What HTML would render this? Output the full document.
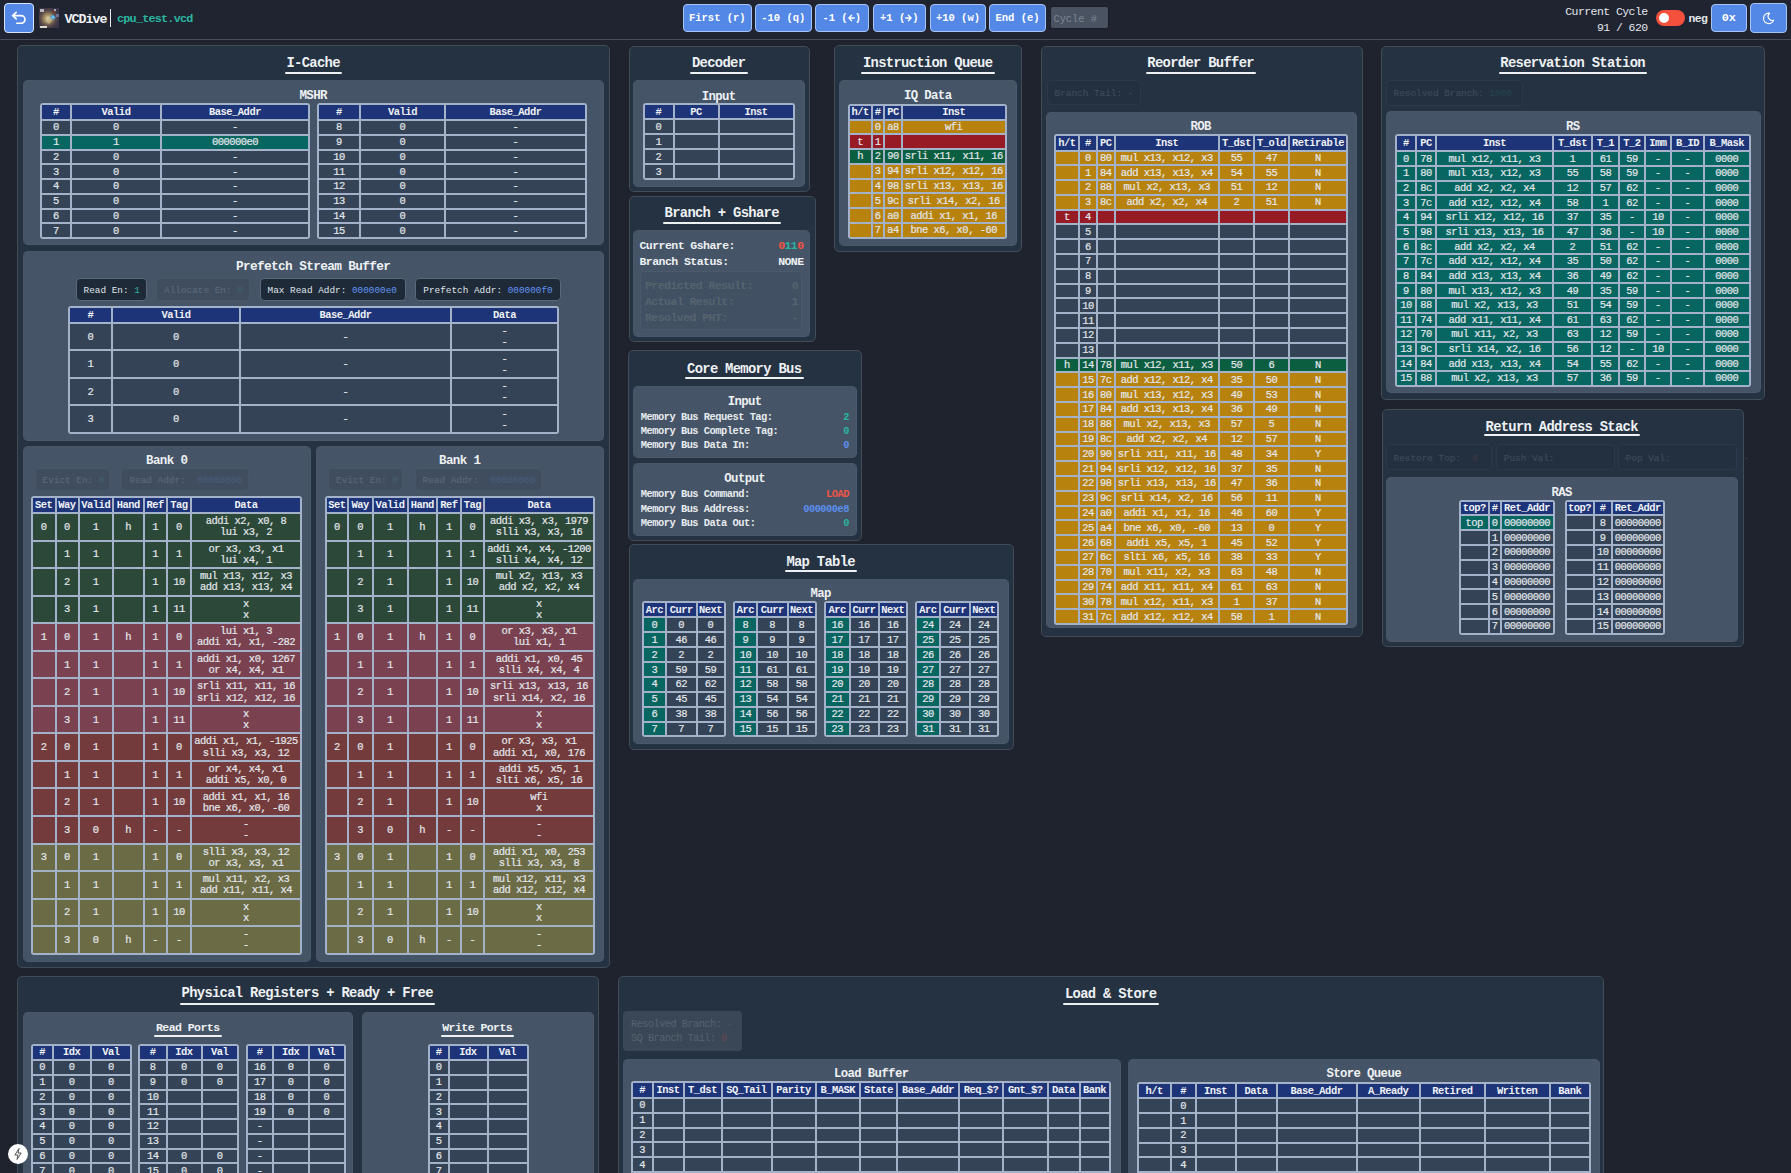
<!DOCTYPE html><html><head><meta charset="utf-8"><style>
*{box-sizing:border-box}
html,body{margin:0;padding:0}
body{width:1791px;height:1173px;overflow:hidden;background:#1f232e;font-family:"Liberation Mono",monospace;color:#e8ecf0;position:relative}
.hdr{position:absolute;left:0;top:0;width:1791px;height:39.5px;background:#1f2430;border-bottom:1.5px solid #474e59}
.p{position:absolute;background:#243242;border:1px solid #434b57;border-radius:5px}
.s{position:absolute;background:#455466;border-radius:5px;border:1px solid #4b596a;border-top-color:#485667;border-left-color:#485667}
.t{position:absolute;text-align:center;font-weight:bold;white-space:pre;color:#eef1f4}
.ul{position:absolute;height:2px;background:#eef1f4;border-radius:1px}
.tx{position:absolute;white-space:pre}
.g{position:absolute;display:grid;gap:2px;padding:2px;background:#a3b2c9;border-radius:3px}
.g>div{background:#344355;display:flex;align-items:center;justify-content:center;white-space:pre;overflow:hidden;color:#e3e7ec;-webkit-text-stroke:0.2px #e3e7ec}
.g>div.h{background:#1e3478;font-weight:bold;color:#eef1f5;-webkit-text-stroke:0}
.g>div.te{background:#076660}
.g>div.or{background:#b8820f}
.g>div.rd{background:#961b25}
.g>div.gn{background:#0b5f40}
.g>div.s0{background:#2c4838}
.g>div.s1{background:#7a4250}
.g>div.s2{background:#733b3b}
.g>div.s3{background:#6b6b46}
.ml{display:block;text-align:center;line-height:11.2px;position:relative;top:0.5px}
.b{position:absolute;background:#1f2a38;border:1.5px solid #5a687a;border-radius:4px;font-size:9.4px;display:flex;align-items:center;padding-left:7px;padding-top:2px;white-space:pre;color:#dfe4ea}
.b.dim{opacity:.14}
.btn{position:absolute;padding-top:1px;background:#5388e6;border:1px solid #a8c4f2;border-radius:4px;color:#fff;font-weight:bold;font-size:10.5px;display:flex;align-items:center;justify-content:center;white-space:pre}
</style></head><body>
<div class="hdr"></div>
<div class="btn" style="left:4px;top:3px;width:30px;height:30px;border-color:#d6e4ff"></div>
<svg style="position:absolute;left:0;top:0" width="40" height="40"><path d="M16.2 12.3 L12.6 15.6 L16.2 18.9 M12.8 15.6 H21.2 A3.8 3.8 0 0 1 21.2 23.2 H16.8" fill="none" stroke="#fff" stroke-width="1.6" stroke-linecap="round" stroke-linejoin="round"/></svg>
<svg style="position:absolute;left:39px;top:8px" width="20" height="20" viewBox="0 0 20 20"><defs><radialGradient id="lg" cx="45%" cy="52%" r="55%"><stop offset="0" stop-color="#e6d6ac"/><stop offset=".35" stop-color="#a08a62"/><stop offset=".7" stop-color="#5a4a48"/><stop offset="1" stop-color="#3a3448"/></radialGradient></defs><rect width="20" height="20" fill="url(#lg)"/><path d="M6 13 L12 7 L16 10 L10 16 Z" fill="#cbbf95" opacity=".55"/><path d="M11 9 L14 6.5 L17 9.5 L14 12 Z" fill="#3f9bd4"/><path d="M12.5 9 L14 8 L15.3 9.3 L14 10.4 Z" fill="#8fd6f0"/><rect x="1" y="1" width="4" height="3" fill="#d8d4e0" opacity=".8"/><rect x="1" y="18" width="7" height="2" fill="#eeeadc" opacity=".9"/><rect x="15" y="1" width="2" height="2" fill="#cfe0e8" opacity=".7"/><rect x="17" y="6" width="3" height="3" fill="#8a9ac8" opacity=".6"/><rect x="13" y="3" width="4" height="2" fill="#7a3a30" opacity=".7"/></svg>
<div class="tx" style="top:11.63px;font-size:13.34px;letter-spacing:-0.983px;line-height:16.01px;left:64.5px;font-weight:bold;color:#eef1f4;">VCDive</div>
<div style="position:absolute;left:110px;top:9px;width:1px;height:18px;background:#e8ecf0"></div>
<div class="tx" style="top:12.09px;font-size:11.76px;letter-spacing:-0.756px;line-height:14.11px;left:117px;font-weight:bold;color:#2ab7a0;">cpu_test.vcd</div>
<div class="btn" style="left:682.6px;top:4.4px;width:69.4px;height:27.2px">First (r)</div>
<div class="btn" style="left:754.5px;top:4.4px;width:57.5px;height:27.2px">-10 (q)</div>
<div class="btn" style="left:814.6px;top:4.4px;width:54.2px;height:27.2px">-1 (<svg width="7" height="8" viewBox="0 0 7 8" style="vertical-align:-0.5px"><path d="M6.3 4H1 M3.6 1.2 L0.9 4 L3.6 6.8" fill="none" stroke="#fff" stroke-width="1.3" stroke-linecap="round" stroke-linejoin="round"/></svg>)</div>
<div class="btn" style="left:872.7px;top:4.4px;width:53.2px;height:27.2px">+1 (<svg width="7" height="8" viewBox="0 0 7 8" style="vertical-align:-0.5px"><path d="M0.7 4H6 M3.4 1.2 L6.1 4 L3.4 6.8" fill="none" stroke="#fff" stroke-width="1.3" stroke-linecap="round" stroke-linejoin="round"/></svg>)</div>
<div class="btn" style="left:929.7px;top:4.4px;width:56.5px;height:27.2px">+10 (w)</div>
<div class="btn" style="left:989.3px;top:4.4px;width:56.5px;height:27.2px">End (e)</div>
<div style="position:absolute;left:1050.4px;top:6.4px;width:58.6px;height:23.1px;background:#4a5362;border-radius:3px;color:#7c8594;font-size:10.4px;display:flex;align-items:center;padding-left:2px;padding-top:2px;border:1px solid #1a1e27;white-space:pre">Cycle #</div>
<div class="tx" style="top:5.35px;font-size:11.5px;letter-spacing:-0.57px;line-height:13.8px;left:1047.57px;width:600px;text-align:right;color:#e3e7ec;">Current Cycle</div>
<div class="tx" style="top:20.85px;font-size:11.5px;letter-spacing:-0.57px;line-height:13.8px;left:1047.57px;width:600px;text-align:right;color:#e3e7ec;">91 / 620</div>
<div style="position:absolute;left:1656px;top:10px;width:29px;height:16px;background:#f4503d;border-radius:8px"></div>
<div style="position:absolute;left:1658.7px;top:12.7px;width:10.6px;height:10.6px;background:#fff;border-radius:6px"></div>
<div class="tx" style="top:12.06px;font-size:11.45px;letter-spacing:-0.567px;line-height:13.74px;left:1688.5px;font-weight:bold;color:#e3e7ec;">neg</div>
<div class="btn" style="left:1711px;top:4px;width:35.6px;height:27.7px;font-size:11.8px">0x</div>
<div class="btn" style="left:1750px;top:3px;width:36.8px;height:29.5px"></div>
<svg style="position:absolute;left:1750px;top:3px" width="37" height="30"><path d="M19.6 10.2 A5.2 5.2 0 1 0 23.6 17.2 A4.1 4.1 0 0 1 19.6 10.2 Z" fill="none" stroke="#fff" stroke-width="1.2" stroke-linejoin="round"/></svg>
<div class="p" style="left:17px;top:45px;width:593px;height:922.5px"></div>
<div class="t" style="left:13.16px;top:55.16px;width:600px;font-size:13.84px;letter-spacing:-0.686px;line-height:16.61px">I-Cache</div>
<div class="ul" style="left:284.83px;top:71.5px;width:57.34px"></div>
<div class="s" style="left:23px;top:80px;width:581px;height:165px"></div>
<div class="t" style="left:13.19px;top:89.17px;width:600px;font-size:12.54px;letter-spacing:-0.621px;line-height:15.05px">MSHR</div>
<div class="g" style="left:40px;top:103px;width:270.00px;height:136.00px;grid-template-columns:28px 88px 146px;grid-template-rows:14px repeat(8,12.75px);font-size:10.46px;letter-spacing:-0.518px">
<div class="h">#</div><div class="h">Valid</div><div class="h">Base_Addr</div><div>0</div><div>0</div><div>-</div><div class="te">1</div><div class="te">1</div><div class="te">000000e0</div><div>2</div><div>0</div><div>-</div><div>3</div><div>0</div><div>-</div><div>4</div><div>0</div><div>-</div><div>5</div><div>0</div><div>-</div><div>6</div><div>0</div><div>-</div><div>7</div><div>0</div><div>-</div>
</div>
<div class="g" style="left:317px;top:103px;width:270.00px;height:136.00px;grid-template-columns:40px 83px 139px;grid-template-rows:14px repeat(8,12.75px);font-size:10.46px;letter-spacing:-0.518px">
<div class="h">#</div><div class="h">Valid</div><div class="h">Base_Addr</div><div>8</div><div>0</div><div>-</div><div>9</div><div>0</div><div>-</div><div>10</div><div>0</div><div>-</div><div>11</div><div>0</div><div>-</div><div>12</div><div>0</div><div>-</div><div>13</div><div>0</div><div>-</div><div>14</div><div>0</div><div>-</div><div>15</div><div>0</div><div>-</div>
</div>
<div class="s" style="left:23px;top:251px;width:581px;height:190px"></div>
<div class="t" style="left:13.18px;top:258.64px;width:600px;font-size:12.75px;letter-spacing:-0.632px;line-height:15.3px">Prefetch Stream Buffer</div>
<div class="b" style="left:75.5px;top:277.6px;width:71.5px;height:23.899999999999977px">Read En: <span style="color:#2bb3a0">1</span></div>
<div class="b dim" style="left:156px;top:277.6px;width:94px;height:23.899999999999977px">Allocate En: <span style="color:#2bb3a0">0</span></div>
<div class="b" style="left:259.5px;top:277.6px;width:146.5px;height:23.899999999999977px">Max Read Addr: <span style="color:#6094f4">000000e0</span></div>
<div class="b" style="left:415.3px;top:277.6px;width:146.2px;height:23.899999999999977px">Prefetch Addr: <span style="color:#6094f4">000000f0</span></div>
<div class="g" style="left:68px;top:305.8px;width:491.00px;height:128.20px;grid-template-columns:41px 126px 209px 105px;grid-template-rows:14.2px repeat(4,25.5px);font-size:10.46px;letter-spacing:-0.518px">
<div class="h">#</div><div class="h">Valid</div><div class="h">Base_Addr</div><div class="h">Data</div><div>0</div><div>0</div><div>-</div><div><span class="ml">-<br>-</span></div><div>1</div><div>0</div><div>-</div><div><span class="ml">-<br>-</span></div><div>2</div><div>0</div><div>-</div><div><span class="ml">-<br>-</span></div><div>3</div><div>0</div><div>-</div><div><span class="ml">-<br>-</span></div>
</div>
<div class="s" style="left:23px;top:446px;width:287.5px;height:516px"></div>
<div class="t" style="left:-133.31px;top:454.17px;width:600px;font-size:12.54px;letter-spacing:-0.621px;line-height:15.05px">Bank 0</div>
<div class="b dim" style="left:34.5px;top:468.4px;width:75.5px;height:22.200000000000045px">Evict En: <span style="color:#2bb3a0">0</span></div>
<div class="b dim" style="left:121.4px;top:468.4px;width:127.6px;height:22.200000000000045px">Read Addr:  <span style="color:#6094f4">00000000</span></div>
<div class="g" style="left:31px;top:496px;width:271.00px;height:459.00px;grid-template-columns:21.5px 21.0px 32.5px 28.5px 21.5px 22px 108px;grid-template-rows:14px repeat(16,25.562px);font-size:10.46px;letter-spacing:-0.518px">
<div class="h">Set</div><div class="h">Way</div><div class="h">Valid</div><div class="h">Hand</div><div class="h">Ref</div><div class="h">Tag</div><div class="h">Data</div><div class="s0">0</div><div class="s0">0</div><div class="s0">1</div><div class="s0">h</div><div class="s0">1</div><div class="s0">0</div><div class="s0"><span class="ml">addi x2, x0, 8<br>lui x3, 2</span></div><div class="s0"></div><div class="s0">1</div><div class="s0">1</div><div class="s0"></div><div class="s0">1</div><div class="s0">1</div><div class="s0"><span class="ml">or x3, x3, x1<br>lui x4, 1</span></div><div class="s0"></div><div class="s0">2</div><div class="s0">1</div><div class="s0"></div><div class="s0">1</div><div class="s0">10</div><div class="s0"><span class="ml">mul x13, x12, x3<br>add x13, x13, x4</span></div><div class="s0"></div><div class="s0">3</div><div class="s0">1</div><div class="s0"></div><div class="s0">1</div><div class="s0">11</div><div class="s0"><span class="ml">x<br>x</span></div><div class="s1">1</div><div class="s1">0</div><div class="s1">1</div><div class="s1">h</div><div class="s1">1</div><div class="s1">0</div><div class="s1"><span class="ml">lui x1, 3<br>addi x1, x1, -282</span></div><div class="s1"></div><div class="s1">1</div><div class="s1">1</div><div class="s1"></div><div class="s1">1</div><div class="s1">1</div><div class="s1"><span class="ml">addi x1, x0, 1267<br>or x4, x4, x1</span></div><div class="s1"></div><div class="s1">2</div><div class="s1">1</div><div class="s1"></div><div class="s1">1</div><div class="s1">10</div><div class="s1"><span class="ml">srli x11, x11, 16<br>srli x12, x12, 16</span></div><div class="s1"></div><div class="s1">3</div><div class="s1">1</div><div class="s1"></div><div class="s1">1</div><div class="s1">11</div><div class="s1"><span class="ml">x<br>x</span></div><div class="s2">2</div><div class="s2">0</div><div class="s2">1</div><div class="s2"></div><div class="s2">1</div><div class="s2">0</div><div class="s2"><span class="ml">addi x1, x1, -1925<br>slli x3, x3, 12</span></div><div class="s2"></div><div class="s2">1</div><div class="s2">1</div><div class="s2"></div><div class="s2">1</div><div class="s2">1</div><div class="s2"><span class="ml">or x4, x4, x1<br>addi x5, x0, 0</span></div><div class="s2"></div><div class="s2">2</div><div class="s2">1</div><div class="s2"></div><div class="s2">1</div><div class="s2">10</div><div class="s2"><span class="ml">addi x1, x1, 16<br>bne x6, x0, -60</span></div><div class="s2"></div><div class="s2">3</div><div class="s2">0</div><div class="s2">h</div><div class="s2">-</div><div class="s2">-</div><div class="s2"><span class="ml">-<br>-</span></div><div class="s3">3</div><div class="s3">0</div><div class="s3">1</div><div class="s3"></div><div class="s3">1</div><div class="s3">0</div><div class="s3"><span class="ml">slli x3, x3, 12<br>or x3, x3, x1</span></div><div class="s3"></div><div class="s3">1</div><div class="s3">1</div><div class="s3"></div><div class="s3">1</div><div class="s3">1</div><div class="s3"><span class="ml">mul x11, x2, x3<br>add x11, x11, x4</span></div><div class="s3"></div><div class="s3">2</div><div class="s3">1</div><div class="s3"></div><div class="s3">1</div><div class="s3">10</div><div class="s3"><span class="ml">x<br>x</span></div><div class="s3"></div><div class="s3">3</div><div class="s3">0</div><div class="s3">h</div><div class="s3">-</div><div class="s3">-</div><div class="s3"><span class="ml">-<br>-</span></div>
</div>
<div class="s" style="left:316px;top:446px;width:287.5px;height:516px"></div>
<div class="t" style="left:159.69px;top:454.17px;width:600px;font-size:12.54px;letter-spacing:-0.621px;line-height:15.05px">Bank 1</div>
<div class="b dim" style="left:328px;top:468.4px;width:75px;height:22.200000000000045px">Evict En: <span style="color:#2bb3a0">0</span></div>
<div class="b dim" style="left:414.5px;top:468.4px;width:127.5px;height:22.200000000000045px">Read Addr:  <span style="color:#6094f4">00000000</span></div>
<div class="g" style="left:325px;top:496px;width:270.00px;height:459.00px;grid-template-columns:20px 22.5px 33.0px 27.5px 22px 21px 108px;grid-template-rows:14px repeat(16,25.562px);font-size:10.46px;letter-spacing:-0.518px">
<div class="h">Set</div><div class="h">Way</div><div class="h">Valid</div><div class="h">Hand</div><div class="h">Ref</div><div class="h">Tag</div><div class="h">Data</div><div class="s0">0</div><div class="s0">0</div><div class="s0">1</div><div class="s0">h</div><div class="s0">1</div><div class="s0">0</div><div class="s0"><span class="ml">addi x3, x3, 1979<br>slli x3, x3, 16</span></div><div class="s0"></div><div class="s0">1</div><div class="s0">1</div><div class="s0"></div><div class="s0">1</div><div class="s0">1</div><div class="s0"><span class="ml">addi x4, x4, -1200<br>slli x4, x4, 12</span></div><div class="s0"></div><div class="s0">2</div><div class="s0">1</div><div class="s0"></div><div class="s0">1</div><div class="s0">10</div><div class="s0"><span class="ml">mul x2, x13, x3<br>add x2, x2, x4</span></div><div class="s0"></div><div class="s0">3</div><div class="s0">1</div><div class="s0"></div><div class="s0">1</div><div class="s0">11</div><div class="s0"><span class="ml">x<br>x</span></div><div class="s1">1</div><div class="s1">0</div><div class="s1">1</div><div class="s1">h</div><div class="s1">1</div><div class="s1">0</div><div class="s1"><span class="ml">or x3, x3, x1<br>lui x1, 1</span></div><div class="s1"></div><div class="s1">1</div><div class="s1">1</div><div class="s1"></div><div class="s1">1</div><div class="s1">1</div><div class="s1"><span class="ml">addi x1, x0, 45<br>slli x4, x4, 4</span></div><div class="s1"></div><div class="s1">2</div><div class="s1">1</div><div class="s1"></div><div class="s1">1</div><div class="s1">10</div><div class="s1"><span class="ml">srli x13, x13, 16<br>srli x14, x2, 16</span></div><div class="s1"></div><div class="s1">3</div><div class="s1">1</div><div class="s1"></div><div class="s1">1</div><div class="s1">11</div><div class="s1"><span class="ml">x<br>x</span></div><div class="s2">2</div><div class="s2">0</div><div class="s2">1</div><div class="s2"></div><div class="s2">1</div><div class="s2">0</div><div class="s2"><span class="ml">or x3, x3, x1<br>addi x1, x0, 176</span></div><div class="s2"></div><div class="s2">1</div><div class="s2">1</div><div class="s2"></div><div class="s2">1</div><div class="s2">1</div><div class="s2"><span class="ml">addi x5, x5, 1<br>slti x6, x5, 16</span></div><div class="s2"></div><div class="s2">2</div><div class="s2">1</div><div class="s2"></div><div class="s2">1</div><div class="s2">10</div><div class="s2"><span class="ml">wfi<br>x</span></div><div class="s2"></div><div class="s2">3</div><div class="s2">0</div><div class="s2">h</div><div class="s2">-</div><div class="s2">-</div><div class="s2"><span class="ml">-<br>-</span></div><div class="s3">3</div><div class="s3">0</div><div class="s3">1</div><div class="s3"></div><div class="s3">1</div><div class="s3">0</div><div class="s3"><span class="ml">addi x1, x0, 253<br>slli x3, x3, 8</span></div><div class="s3"></div><div class="s3">1</div><div class="s3">1</div><div class="s3"></div><div class="s3">1</div><div class="s3">1</div><div class="s3"><span class="ml">mul x12, x11, x3<br>add x12, x12, x4</span></div><div class="s3"></div><div class="s3">2</div><div class="s3">1</div><div class="s3"></div><div class="s3">1</div><div class="s3">10</div><div class="s3"><span class="ml">x<br>x</span></div><div class="s3"></div><div class="s3">3</div><div class="s3">0</div><div class="s3">h</div><div class="s3">-</div><div class="s3">-</div><div class="s3"><span class="ml">-<br>-</span></div>
</div>
<div class="p" style="left:628.5px;top:45.5px;width:181.5px;height:146.0px"></div>
<div class="t" style="left:418.66px;top:55.36px;width:600px;font-size:13.84px;letter-spacing:-0.686px;line-height:16.61px">Decoder</div>
<div class="ul" style="left:690.33px;top:72px;width:57.34px"></div>
<div class="s" style="left:633px;top:80.2px;width:172px;height:106.39999999999999px"></div>
<div class="t" style="left:418.69px;top:89.71px;width:600px;font-size:12.32px;letter-spacing:-0.61px;line-height:14.78px">Input</div>
<div class="g" style="left:642.5px;top:103.4px;width:152.00px;height:76.60px;grid-template-columns:28.0px 43.0px 73.0px;grid-template-rows:13.1px repeat(4,12.875px);font-size:10.46px;letter-spacing:-0.518px">
<div class="h">#</div><div class="h">PC</div><div class="h">Inst</div><div>0</div><div></div><div></div><div>1</div><div></div><div></div><div>2</div><div></div><div></div><div>3</div><div></div><div></div>
</div>
<div class="p" style="left:628.5px;top:195.5px;width:187.0px;height:146.0px"></div>
<div class="t" style="left:421.66px;top:205.06px;width:600px;font-size:13.84px;letter-spacing:-0.686px;line-height:16.61px">Branch + Gshare</div>
<div class="ul" style="left:662.85px;top:222px;width:118.30px"></div>
<div class="s" style="left:633.3px;top:229.8px;width:176.70000000000005px;height:106.80000000000001px"></div>
<div class="tx" style="top:239.05px;font-size:11.55px;letter-spacing:-0.572px;line-height:13.86px;left:639.5px;font-weight:bold;color:#eef1f4;">Current Gshare:</div>
<div class="tx" style="top:239.05px;font-size:11.55px;letter-spacing:-0.572px;line-height:13.86px;left:203.572px;width:600px;text-align:right;font-weight:bold;"><span style="color:#f05545">0</span><span style="color:#2bb3a0">11</span><span style="color:#f05545">0</span></div>
<div class="tx" style="top:255.05px;font-size:11.55px;letter-spacing:-0.572px;line-height:13.86px;left:639.5px;font-weight:bold;color:#eef1f4;">Branch Status:</div>
<div class="tx" style="top:255.05px;font-size:11.55px;letter-spacing:-0.572px;line-height:13.86px;left:203.572px;width:600px;text-align:right;font-weight:bold;color:#eef1f4;">NONE</div>
<div style="position:absolute;left:640px;top:271px;width:162px;height:58.6px;border:1px solid #4e5d6f;border-radius:4px;background:#3f4e60;opacity:.6"></div>
<div class="tx" style="top:278.75px;font-size:11.55px;letter-spacing:-0.572px;line-height:13.86px;left:645px;font-weight:bold;color:#56646f;">Predicted Result:</div>
<div class="tx" style="top:278.75px;font-size:11.55px;letter-spacing:-0.572px;line-height:13.86px;left:198.072px;width:600px;text-align:right;font-weight:bold;color:#56646f;">0</div>
<div class="tx" style="top:294.75px;font-size:11.55px;letter-spacing:-0.572px;line-height:13.86px;left:645px;font-weight:bold;color:#56646f;">Actual Result:</div>
<div class="tx" style="top:294.75px;font-size:11.55px;letter-spacing:-0.572px;line-height:13.86px;left:198.072px;width:600px;text-align:right;font-weight:bold;color:#56646f;">1</div>
<div class="tx" style="top:310.75px;font-size:11.55px;letter-spacing:-0.572px;line-height:13.86px;left:645px;font-weight:bold;color:#56646f;">Resolved PHT:</div>
<div class="tx" style="top:310.75px;font-size:11.55px;letter-spacing:-0.572px;line-height:13.86px;left:198.072px;width:600px;text-align:right;font-weight:bold;color:#56646f;">-</div>
<div class="p" style="left:628px;top:350px;width:234px;height:190.5px"></div>
<div class="t" style="left:444.16px;top:360.56px;width:600px;font-size:13.84px;letter-spacing:-0.686px;line-height:16.61px">Core Memory Bus</div>
<div class="ul" style="left:685.35px;top:377px;width:118.30px"></div>
<div class="s" style="left:633.3px;top:386px;width:223.70000000000005px;height:71.5px"></div>
<div class="t" style="left:444.69px;top:394.91px;width:600px;font-size:12.32px;letter-spacing:-0.61px;line-height:14.78px">Input</div>
<div class="tx" style="top:411.44px;font-size:10.41px;letter-spacing:-0.516px;line-height:12.49px;left:640.8px;font-weight:bold;color:#e8ecf0;">Memory Bus Request Tag:</div>
<div class="tx" style="top:411.44px;font-size:10.41px;letter-spacing:-0.516px;line-height:12.49px;left:249.016px;width:600px;text-align:right;font-weight:bold;color:#2bb3a0;">2</div>
<div class="tx" style="top:425.44px;font-size:10.41px;letter-spacing:-0.516px;line-height:12.49px;left:640.8px;font-weight:bold;color:#e8ecf0;">Memory Bus Complete Tag:</div>
<div class="tx" style="top:425.44px;font-size:10.41px;letter-spacing:-0.516px;line-height:12.49px;left:249.016px;width:600px;text-align:right;font-weight:bold;color:#2bb3a0;">0</div>
<div class="tx" style="top:439.44px;font-size:10.41px;letter-spacing:-0.516px;line-height:12.49px;left:640.8px;font-weight:bold;color:#e8ecf0;">Memory Bus Data In:</div>
<div class="tx" style="top:439.44px;font-size:10.41px;letter-spacing:-0.516px;line-height:12.49px;left:249.016px;width:600px;text-align:right;font-weight:bold;color:#5b8ff0;">0</div>
<div class="s" style="left:633.3px;top:462.7px;width:223.70000000000005px;height:73.00000000000006px"></div>
<div class="t" style="left:444.69px;top:471.61px;width:600px;font-size:12.32px;letter-spacing:-0.61px;line-height:14.78px">Output</div>
<div class="tx" style="top:488.24px;font-size:10.41px;letter-spacing:-0.516px;line-height:12.49px;left:640.8px;font-weight:bold;color:#e8ecf0;">Memory Bus Command:</div>
<div class="tx" style="top:488.24px;font-size:10.41px;letter-spacing:-0.516px;line-height:12.49px;left:249.016px;width:600px;text-align:right;font-weight:bold;color:#f05545;">LOAD</div>
<div class="tx" style="top:502.74px;font-size:10.41px;letter-spacing:-0.516px;line-height:12.49px;left:640.8px;font-weight:bold;color:#e8ecf0;">Memory Bus Address:</div>
<div class="tx" style="top:502.74px;font-size:10.41px;letter-spacing:-0.516px;line-height:12.49px;left:249.016px;width:600px;text-align:right;font-weight:bold;color:#5b8ff0;">000000e8</div>
<div class="tx" style="top:517.24px;font-size:10.41px;letter-spacing:-0.516px;line-height:12.49px;left:640.8px;font-weight:bold;color:#e8ecf0;">Memory Bus Data Out:</div>
<div class="tx" style="top:517.24px;font-size:10.41px;letter-spacing:-0.516px;line-height:12.49px;left:249.016px;width:600px;text-align:right;font-weight:bold;color:#2bb3a0;">0</div>
<div class="p" style="left:628.5px;top:543.5px;width:385.0px;height:206.0px"></div>
<div class="t" style="left:520.66px;top:554.46px;width:600px;font-size:13.84px;letter-spacing:-0.686px;line-height:16.61px">Map Table</div>
<div class="ul" style="left:784.71px;top:570.2px;width:72.58px"></div>
<div class="s" style="left:633.4px;top:579px;width:375.20000000000005px;height:164.70000000000005px"></div>
<div class="t" style="left:520.70px;top:587.41px;width:600px;font-size:12.32px;letter-spacing:-0.61px;line-height:14.78px">Map</div>
<div class="g" style="left:642px;top:601.4px;width:83.50px;height:136.10px;grid-template-columns:21px 28.5px 26.0px;grid-template-rows:13.1px repeat(8,12.875px);font-size:10.46px;letter-spacing:-0.518px">
<div class="h">Arc</div><div class="h">Curr</div><div class="h">Next</div><div class="te">0</div><div>0</div><div>0</div><div class="te">1</div><div>46</div><div>46</div><div class="te">2</div><div>2</div><div>2</div><div class="te">3</div><div>59</div><div>59</div><div class="te">4</div><div>62</div><div>62</div><div class="te">5</div><div>45</div><div>45</div><div class="te">6</div><div>38</div><div>38</div><div class="te">7</div><div>7</div><div>7</div>
</div>
<div class="g" style="left:733px;top:601.4px;width:83.50px;height:136.10px;grid-template-columns:21px 28.5px 26.0px;grid-template-rows:13.1px repeat(8,12.875px);font-size:10.46px;letter-spacing:-0.518px">
<div class="h">Arc</div><div class="h">Curr</div><div class="h">Next</div><div class="te">8</div><div>8</div><div>8</div><div class="te">9</div><div>9</div><div>9</div><div class="te">10</div><div>10</div><div>10</div><div class="te">11</div><div>61</div><div>61</div><div class="te">12</div><div>58</div><div>58</div><div class="te">13</div><div>54</div><div>54</div><div class="te">14</div><div>56</div><div>56</div><div class="te">15</div><div>15</div><div>15</div>
</div>
<div class="g" style="left:824px;top:601.4px;width:84.00px;height:136.10px;grid-template-columns:22.5px 27.0px 26.5px;grid-template-rows:13.1px repeat(8,12.875px);font-size:10.46px;letter-spacing:-0.518px">
<div class="h">Arc</div><div class="h">Curr</div><div class="h">Next</div><div class="te">16</div><div>16</div><div>16</div><div class="te">17</div><div>17</div><div>17</div><div class="te">18</div><div>18</div><div>18</div><div class="te">19</div><div>19</div><div>19</div><div class="te">20</div><div>20</div><div>20</div><div class="te">21</div><div>21</div><div>21</div><div class="te">22</div><div>22</div><div>22</div><div class="te">23</div><div>23</div><div>23</div>
</div>
<div class="g" style="left:915px;top:601.4px;width:84.00px;height:136.10px;grid-template-columns:22px 27.5px 26.5px;grid-template-rows:13.1px repeat(8,12.875px);font-size:10.46px;letter-spacing:-0.518px">
<div class="h">Arc</div><div class="h">Curr</div><div class="h">Next</div><div class="te">24</div><div>24</div><div>24</div><div class="te">25</div><div>25</div><div>25</div><div class="te">26</div><div>26</div><div>26</div><div class="te">27</div><div>27</div><div>27</div><div class="te">28</div><div>28</div><div>28</div><div class="te">29</div><div>29</div><div>29</div><div class="te">30</div><div>30</div><div>30</div><div class="te">31</div><div>31</div><div>31</div>
</div>
<div class="p" style="left:834px;top:45.3px;width:188px;height:206.7px"></div>
<div class="t" style="left:627.66px;top:55.46px;width:600px;font-size:13.84px;letter-spacing:-0.686px;line-height:16.61px">Instruction Queue</div>
<div class="ul" style="left:861.23px;top:72.3px;width:133.54px"></div>
<div class="s" style="left:839px;top:80px;width:177.70000000000005px;height:166px"></div>
<div class="t" style="left:627.70px;top:89.41px;width:600px;font-size:12.32px;letter-spacing:-0.61px;line-height:14.78px">IQ Data</div>
<div class="g" style="left:848px;top:103.5px;width:158.50px;height:135.50px;grid-template-columns:20.5px 10.5px 16px 101.5px;grid-template-rows:13.0px repeat(8,12.812px);font-size:10.46px;letter-spacing:-0.518px">
<div class="h">h/t</div><div class="h">#</div><div class="h">PC</div><div class="h">Inst</div><div class="or"></div><div class="or">0</div><div class="or">a8</div><div class="or">wfi</div><div class="rd">t</div><div class="rd">1</div><div class="rd"></div><div class="rd"></div><div class="gn">h</div><div class="gn">2</div><div class="gn">90</div><div class="gn">srli x11, x11, 16</div><div class="or"></div><div class="or">3</div><div class="or">94</div><div class="or">srli x12, x12, 16</div><div class="or"></div><div class="or">4</div><div class="or">98</div><div class="or">srli x13, x13, 16</div><div class="or"></div><div class="or">5</div><div class="or">9c</div><div class="or">srli x14, x2, 16</div><div class="or"></div><div class="or">6</div><div class="or">a0</div><div class="or">addi x1, x1, 16</div><div class="or"></div><div class="or">7</div><div class="or">a4</div><div class="or">bne x6, x0, -60</div>
</div>
<div class="p" style="left:1040.5px;top:45.5px;width:322.0px;height:591.0px"></div>
<div class="t" style="left:900.66px;top:55.36px;width:600px;font-size:13.84px;letter-spacing:-0.686px;line-height:16.61px">Reorder Buffer</div>
<div class="ul" style="left:1145.66px;top:72.2px;width:110.68px"></div>
<div class="b dim" style="left:1046.5px;top:80.4px;width:94.90000000000009px;height:25.099999999999994px">Branch Tail: -</div>
<div class="s" style="left:1046px;top:111.5px;width:311px;height:516.5px"></div>
<div class="t" style="left:900.70px;top:120.01px;width:600px;font-size:12.32px;letter-spacing:-0.61px;line-height:14.78px">ROB</div>
<div class="g" style="left:1054px;top:134px;width:294.00px;height:491.00px;grid-template-columns:22px 16px 15.5px 102.5px 33px 33px 56px;grid-template-rows:13.5px repeat(32,12.797px);font-size:10.46px;letter-spacing:-0.518px">
<div class="h">h/t</div><div class="h">#</div><div class="h">PC</div><div class="h">Inst</div><div class="h">T_dst</div><div class="h">T_old</div><div class="h">Retirable</div><div class="or"></div><div class="or">0</div><div class="or">80</div><div class="or">mul x13, x12, x3</div><div class="or">55</div><div class="or">47</div><div class="or">N</div><div class="or"></div><div class="or">1</div><div class="or">84</div><div class="or">add x13, x13, x4</div><div class="or">54</div><div class="or">55</div><div class="or">N</div><div class="or"></div><div class="or">2</div><div class="or">88</div><div class="or">mul x2, x13, x3</div><div class="or">51</div><div class="or">12</div><div class="or">N</div><div class="or"></div><div class="or">3</div><div class="or">8c</div><div class="or">add x2, x2, x4</div><div class="or">2</div><div class="or">51</div><div class="or">N</div><div class="rd">t</div><div class="rd">4</div><div class="rd"></div><div class="rd"></div><div class="rd"></div><div class="rd"></div><div class="rd"></div><div></div><div>5</div><div></div><div></div><div></div><div></div><div></div><div></div><div>6</div><div></div><div></div><div></div><div></div><div></div><div></div><div>7</div><div></div><div></div><div></div><div></div><div></div><div></div><div>8</div><div></div><div></div><div></div><div></div><div></div><div></div><div>9</div><div></div><div></div><div></div><div></div><div></div><div></div><div>10</div><div></div><div></div><div></div><div></div><div></div><div></div><div>11</div><div></div><div></div><div></div><div></div><div></div><div></div><div>12</div><div></div><div></div><div></div><div></div><div></div><div></div><div>13</div><div></div><div></div><div></div><div></div><div></div><div class="gn">h</div><div class="gn">14</div><div class="gn">78</div><div class="gn">mul x12, x11, x3</div><div class="gn">50</div><div class="gn">6</div><div class="gn">N</div><div class="or"></div><div class="or">15</div><div class="or">7c</div><div class="or">add x12, x12, x4</div><div class="or">35</div><div class="or">50</div><div class="or">N</div><div class="or"></div><div class="or">16</div><div class="or">80</div><div class="or">mul x13, x12, x3</div><div class="or">49</div><div class="or">53</div><div class="or">N</div><div class="or"></div><div class="or">17</div><div class="or">84</div><div class="or">add x13, x13, x4</div><div class="or">36</div><div class="or">49</div><div class="or">N</div><div class="or"></div><div class="or">18</div><div class="or">88</div><div class="or">mul x2, x13, x3</div><div class="or">57</div><div class="or">5</div><div class="or">N</div><div class="or"></div><div class="or">19</div><div class="or">8c</div><div class="or">add x2, x2, x4</div><div class="or">12</div><div class="or">57</div><div class="or">N</div><div class="or"></div><div class="or">20</div><div class="or">90</div><div class="or">srli x11, x11, 16</div><div class="or">48</div><div class="or">34</div><div class="or">Y</div><div class="or"></div><div class="or">21</div><div class="or">94</div><div class="or">srli x12, x12, 16</div><div class="or">37</div><div class="or">35</div><div class="or">N</div><div class="or"></div><div class="or">22</div><div class="or">98</div><div class="or">srli x13, x13, 16</div><div class="or">47</div><div class="or">36</div><div class="or">N</div><div class="or"></div><div class="or">23</div><div class="or">9c</div><div class="or">srli x14, x2, 16</div><div class="or">56</div><div class="or">11</div><div class="or">N</div><div class="or"></div><div class="or">24</div><div class="or">a0</div><div class="or">addi x1, x1, 16</div><div class="or">46</div><div class="or">60</div><div class="or">Y</div><div class="or"></div><div class="or">25</div><div class="or">a4</div><div class="or">bne x6, x0, -60</div><div class="or">13</div><div class="or">0</div><div class="or">Y</div><div class="or"></div><div class="or">26</div><div class="or">68</div><div class="or">addi x5, x5, 1</div><div class="or">45</div><div class="or">52</div><div class="or">Y</div><div class="or"></div><div class="or">27</div><div class="or">6c</div><div class="or">slti x6, x5, 16</div><div class="or">38</div><div class="or">33</div><div class="or">Y</div><div class="or"></div><div class="or">28</div><div class="or">70</div><div class="or">mul x11, x2, x3</div><div class="or">63</div><div class="or">48</div><div class="or">N</div><div class="or"></div><div class="or">29</div><div class="or">74</div><div class="or">add x11, x11, x4</div><div class="or">61</div><div class="or">63</div><div class="or">N</div><div class="or"></div><div class="or">30</div><div class="or">78</div><div class="or">mul x12, x11, x3</div><div class="or">1</div><div class="or">37</div><div class="or">N</div><div class="or"></div><div class="or">31</div><div class="or">7c</div><div class="or">add x12, x12, x4</div><div class="or">58</div><div class="or">1</div><div class="or">N</div>
</div>
<div class="p" style="left:1381px;top:45.5px;width:384px;height:354.0px"></div>
<div class="t" style="left:1272.66px;top:55.26px;width:600px;font-size:13.84px;letter-spacing:-0.686px;line-height:16.61px">Reservation Station</div>
<div class="ul" style="left:1498.61px;top:72px;width:148.78px"></div>
<div class="b dim" style="left:1385.6px;top:79.7px;width:137.60000000000014px;height:26.5px">Resolved Branch: <span style="color:#2bb3a0">1000</span></div>
<div class="s" style="left:1386px;top:111px;width:375px;height:282.3px"></div>
<div class="t" style="left:1272.69px;top:120.31px;width:600px;font-size:12.32px;letter-spacing:-0.61px;line-height:14.78px">RS</div>
<div class="g" style="left:1395px;top:134.2px;width:355.50px;height:252.80px;grid-template-columns:18px 18px 115px 37px 25px 24px 24px 31px 43.5px;grid-template-rows:14.1px repeat(16,12.669px);font-size:10.46px;letter-spacing:-0.518px">
<div class="h">#</div><div class="h">PC</div><div class="h">Inst</div><div class="h">T_dst</div><div class="h">T_1</div><div class="h">T_2</div><div class="h">Imm</div><div class="h">B_ID</div><div class="h">B_Mask</div><div class="te">0</div><div class="te">78</div><div class="te">mul x12, x11, x3</div><div class="te">1</div><div class="te">61</div><div class="te">59</div><div class="te">-</div><div class="te">-</div><div class="te">0000</div><div class="te">1</div><div class="te">80</div><div class="te">mul x13, x12, x3</div><div class="te">55</div><div class="te">58</div><div class="te">59</div><div class="te">-</div><div class="te">-</div><div class="te">0000</div><div class="te">2</div><div class="te">8c</div><div class="te">add x2, x2, x4</div><div class="te">12</div><div class="te">57</div><div class="te">62</div><div class="te">-</div><div class="te">-</div><div class="te">0000</div><div class="te">3</div><div class="te">7c</div><div class="te">add x12, x12, x4</div><div class="te">58</div><div class="te">1</div><div class="te">62</div><div class="te">-</div><div class="te">-</div><div class="te">0000</div><div class="te">4</div><div class="te">94</div><div class="te">srli x12, x12, 16</div><div class="te">37</div><div class="te">35</div><div class="te">-</div><div class="te">10</div><div class="te">-</div><div class="te">0000</div><div class="te">5</div><div class="te">98</div><div class="te">srli x13, x13, 16</div><div class="te">47</div><div class="te">36</div><div class="te">-</div><div class="te">10</div><div class="te">-</div><div class="te">0000</div><div class="te">6</div><div class="te">8c</div><div class="te">add x2, x2, x4</div><div class="te">2</div><div class="te">51</div><div class="te">62</div><div class="te">-</div><div class="te">-</div><div class="te">0000</div><div class="te">7</div><div class="te">7c</div><div class="te">add x12, x12, x4</div><div class="te">35</div><div class="te">50</div><div class="te">62</div><div class="te">-</div><div class="te">-</div><div class="te">0000</div><div class="te">8</div><div class="te">84</div><div class="te">add x13, x13, x4</div><div class="te">36</div><div class="te">49</div><div class="te">62</div><div class="te">-</div><div class="te">-</div><div class="te">0000</div><div class="te">9</div><div class="te">80</div><div class="te">mul x13, x12, x3</div><div class="te">49</div><div class="te">35</div><div class="te">59</div><div class="te">-</div><div class="te">-</div><div class="te">0000</div><div class="te">10</div><div class="te">88</div><div class="te">mul x2, x13, x3</div><div class="te">51</div><div class="te">54</div><div class="te">59</div><div class="te">-</div><div class="te">-</div><div class="te">0000</div><div class="te">11</div><div class="te">74</div><div class="te">add x11, x11, x4</div><div class="te">61</div><div class="te">63</div><div class="te">62</div><div class="te">-</div><div class="te">-</div><div class="te">0000</div><div class="te">12</div><div class="te">70</div><div class="te">mul x11, x2, x3</div><div class="te">63</div><div class="te">12</div><div class="te">59</div><div class="te">-</div><div class="te">-</div><div class="te">0000</div><div class="te">13</div><div class="te">9c</div><div class="te">srli x14, x2, 16</div><div class="te">56</div><div class="te">12</div><div class="te">-</div><div class="te">10</div><div class="te">-</div><div class="te">0000</div><div class="te">14</div><div class="te">84</div><div class="te">add x13, x13, x4</div><div class="te">54</div><div class="te">55</div><div class="te">62</div><div class="te">-</div><div class="te">-</div><div class="te">0000</div><div class="te">15</div><div class="te">88</div><div class="te">mul x2, x13, x3</div><div class="te">57</div><div class="te">36</div><div class="te">59</div><div class="te">-</div><div class="te">-</div><div class="te">0000</div>
</div>
<div class="p" style="left:1381.5px;top:408.5px;width:362.0px;height:238.0px"></div>
<div class="t" style="left:1261.66px;top:419.16px;width:600px;font-size:13.84px;letter-spacing:-0.686px;line-height:16.61px">Return Address Stack</div>
<div class="ul" style="left:1483.80px;top:434.4px;width:156.40px"></div>
<div class="b dim" style="left:1385.6px;top:444.3px;width:106.40000000000009px;height:25.5px">Restore Top:  <span style="color:#f05545">0</span></div>
<div class="b dim" style="left:1495.8px;top:444.3px;width:119.70000000000005px;height:25.5px">Push Val:            -</div>
<div class="b dim" style="left:1617.7px;top:444.3px;width:119.70000000000005px;height:25.5px">Pop Val:             -</div>
<div class="s" style="left:1386px;top:477px;width:352px;height:165px"></div>
<div class="t" style="left:1261.69px;top:485.61px;width:600px;font-size:12.32px;letter-spacing:-0.61px;line-height:14.78px">RAS</div>
<div class="g" style="left:1458.5px;top:499.7px;width:96.00px;height:135.30px;grid-template-columns:27.5px 9.5px 51.0px;grid-template-rows:12.8px repeat(8,12.812px);font-size:10.46px;letter-spacing:-0.518px">
<div class="h">top?</div><div class="h">#</div><div class="h">Ret_Addr</div><div class="te">top</div><div class="te">0</div><div class="te">00000000</div><div></div><div>1</div><div>00000000</div><div></div><div>2</div><div>00000000</div><div></div><div>3</div><div>00000000</div><div></div><div>4</div><div>00000000</div><div></div><div>5</div><div>00000000</div><div></div><div>6</div><div>00000000</div><div></div><div>7</div><div>00000000</div>
</div>
<div class="g" style="left:1564.5px;top:499.7px;width:100.00px;height:135.30px;grid-template-columns:26.0px 16.5px 49.5px;grid-template-rows:12.8px repeat(8,12.812px);font-size:10.46px;letter-spacing:-0.518px">
<div class="h">top?</div><div class="h">#</div><div class="h">Ret_Addr</div><div></div><div>8</div><div>00000000</div><div></div><div>9</div><div>00000000</div><div></div><div>10</div><div>00000000</div><div></div><div>11</div><div>00000000</div><div></div><div>12</div><div>00000000</div><div></div><div>13</div><div>00000000</div><div></div><div>14</div><div>00000000</div><div></div><div>15</div><div>00000000</div>
</div>
<div class="p" style="left:17px;top:976.3px;width:581.5px;height:223.70000000000005px"></div>
<div class="t" style="left:7.16px;top:985.36px;width:600px;font-size:13.84px;letter-spacing:-0.686px;line-height:16.61px">Physical Registers + Ready + Free</div>
<div class="ul" style="left:179.77px;top:1002.7px;width:255.46px"></div>
<div class="s" style="left:23.2px;top:1011.6px;width:330.3px;height:188.39999999999998px"></div>
<div class="t" style="left:-112.29px;top:1020.85px;width:600px;font-size:11.55px;letter-spacing:-0.572px;line-height:13.86px">Read Ports</div>
<div class="ul" style="left:154.20px;top:1034.5px;width:67.60px"></div>
<div class="s" style="left:361.7px;top:1011.6px;width:232.59999999999997px;height:188.39999999999998px"></div>
<div class="t" style="left:177.21px;top:1020.85px;width:600px;font-size:11.55px;letter-spacing:-0.572px;line-height:13.86px">Write Ports</div>
<div class="ul" style="left:440.52px;top:1034.5px;width:73.96px"></div>
<div class="g" style="left:31px;top:1043.5px;width:101.00px;height:135.50px;grid-template-columns:18.5px 36.5px 38px;grid-template-rows:13.5px repeat(8,12.75px);font-size:10.46px;letter-spacing:-0.518px">
<div class="h">#</div><div class="h">Idx</div><div class="h">Val</div><div>0</div><div>0</div><div>0</div><div>1</div><div>0</div><div>0</div><div>2</div><div>0</div><div>0</div><div>3</div><div>0</div><div>0</div><div>4</div><div>0</div><div>0</div><div>5</div><div>0</div><div>0</div><div>6</div><div>0</div><div>0</div><div>7</div><div>0</div><div>0</div>
</div>
<div class="g" style="left:138px;top:1043.5px;width:101.00px;height:135.50px;grid-template-columns:25.5px 33.0px 34.5px;grid-template-rows:13.5px repeat(8,12.75px);font-size:10.46px;letter-spacing:-0.518px">
<div class="h">#</div><div class="h">Idx</div><div class="h">Val</div><div>8</div><div>0</div><div>0</div><div>9</div><div>0</div><div>0</div><div>10</div><div></div><div></div><div>11</div><div></div><div></div><div>12</div><div></div><div></div><div>13</div><div></div><div></div><div>14</div><div>0</div><div>0</div><div>15</div><div>0</div><div>0</div>
</div>
<div class="g" style="left:245.5px;top:1043.5px;width:100.00px;height:135.50px;grid-template-columns:24.5px 33.5px 34.0px;grid-template-rows:13.5px repeat(8,12.75px);font-size:10.46px;letter-spacing:-0.518px">
<div class="h">#</div><div class="h">Idx</div><div class="h">Val</div><div>16</div><div>0</div><div>0</div><div>17</div><div>0</div><div>0</div><div>18</div><div>0</div><div>0</div><div>19</div><div>0</div><div>0</div><div>-</div><div></div><div></div><div>-</div><div></div><div></div><div>-</div><div></div><div></div><div>-</div><div></div><div></div>
</div>
<div class="g" style="left:428px;top:1043.5px;width:100.50px;height:135.50px;grid-template-columns:17.5px 37.0px 38.0px;grid-template-rows:13.5px repeat(8,12.75px);font-size:10.46px;letter-spacing:-0.518px">
<div class="h">#</div><div class="h">Idx</div><div class="h">Val</div><div>0</div><div></div><div></div><div>1</div><div></div><div></div><div>2</div><div></div><div></div><div>3</div><div></div><div></div><div>4</div><div></div><div></div><div>5</div><div></div><div></div><div>6</div><div></div><div></div><div>7</div><div></div><div></div>
</div>
<div class="p" style="left:618px;top:976.3px;width:986px;height:223.70000000000005px"></div>
<div class="t" style="left:810.66px;top:985.66px;width:600px;font-size:13.84px;letter-spacing:-0.686px;line-height:16.61px">Load &amp; Store</div>
<div class="ul" style="left:1063.28px;top:1002.5px;width:95.44px"></div>
<div style="position:absolute;left:623.2px;top:1011.2px;width:118.6px;height:39.5px;background:#3a4757;border-radius:4px"></div>
<div class="tx" style="top:1018.26px;font-size:10.25px;letter-spacing:-0.508px;line-height:12.3px;left:631px;color:#56636f;">Resolved Branch: <span style="color:#46535f">-</span></div>
<div class="tx" style="top:1032.26px;font-size:10.25px;letter-spacing:-0.508px;line-height:12.3px;left:631px;color:#56636f;">SQ Branch Tail: <span style="color:#6a4850">0</span></div>
<div class="s" style="left:623.2px;top:1059px;width:497.39999999999986px;height:141px"></div>
<div class="t" style="left:571.20px;top:1066.71px;width:600px;font-size:12.32px;letter-spacing:-0.61px;line-height:14.78px">Load Buffer</div>
<div class="g" style="left:631px;top:1081.3px;width:479.50px;height:136.10px;grid-template-columns:18.5px 29.0px 36.0px 48.0px 42.0px 42.5px 35px 60px 42px 42.5px 30.0px 28.0px;grid-template-rows:13.7px repeat(8,12.8px);font-size:10.46px;letter-spacing:-0.518px">
<div class="h">#</div><div class="h">Inst</div><div class="h">T_dst</div><div class="h">SQ_Tail</div><div class="h">Parity</div><div class="h">B_MASK</div><div class="h">State</div><div class="h">Base_Addr</div><div class="h">Req_$?</div><div class="h">Gnt_$?</div><div class="h">Data</div><div class="h">Bank</div><div>0</div><div></div><div></div><div></div><div></div><div></div><div></div><div></div><div></div><div></div><div></div><div></div><div>1</div><div></div><div></div><div></div><div></div><div></div><div></div><div></div><div></div><div></div><div></div><div></div><div>2</div><div></div><div></div><div></div><div></div><div></div><div></div><div></div><div></div><div></div><div></div><div></div><div>3</div><div></div><div></div><div></div><div></div><div></div><div></div><div></div><div></div><div></div><div></div><div></div><div>4</div><div></div><div></div><div></div><div></div><div></div><div></div><div></div><div></div><div></div><div></div><div></div><div>5</div><div></div><div></div><div></div><div></div><div></div><div></div><div></div><div></div><div></div><div></div><div></div><div>6</div><div></div><div></div><div></div><div></div><div></div><div></div><div></div><div></div><div></div><div></div><div></div><div>7</div><div></div><div></div><div></div><div></div><div></div><div></div><div></div><div></div><div></div><div></div><div></div>
</div>
<div class="s" style="left:1128.2px;top:1059.2px;width:471.39999999999986px;height:140.79999999999995px"></div>
<div class="t" style="left:1063.69px;top:1066.91px;width:600px;font-size:12.32px;letter-spacing:-0.61px;line-height:14.78px">Store Queue</div>
<div class="g" style="left:1136.5px;top:1081.7px;width:454.50px;height:135.70px;grid-template-columns:31.5px 22.5px 38.0px 39.0px 78.0px 61.5px 63px 62.5px 38.5px;grid-template-rows:13.8px repeat(8,12.738px);font-size:10.46px;letter-spacing:-0.518px">
<div class="h">h/t</div><div class="h">#</div><div class="h">Inst</div><div class="h">Data</div><div class="h">Base_Addr</div><div class="h">A_Ready</div><div class="h">Retired</div><div class="h">Written</div><div class="h">Bank</div><div></div><div>0</div><div></div><div></div><div></div><div></div><div></div><div></div><div></div><div></div><div>1</div><div></div><div></div><div></div><div></div><div></div><div></div><div></div><div></div><div>2</div><div></div><div></div><div></div><div></div><div></div><div></div><div></div><div></div><div>3</div><div></div><div></div><div></div><div></div><div></div><div></div><div></div><div></div><div>4</div><div></div><div></div><div></div><div></div><div></div><div></div><div></div><div></div><div>5</div><div></div><div></div><div></div><div></div><div></div><div></div><div></div><div></div><div>6</div><div></div><div></div><div></div><div></div><div></div><div></div><div></div><div></div><div>7</div><div></div><div></div><div></div><div></div><div></div><div></div><div></div>
</div>
<div style="position:absolute;left:7.5px;top:1144px;width:20px;height:20px;border-radius:10px;background:#fff"></div>
<svg style="position:absolute;left:7.5px;top:1144px" width="20" height="20"><path d="M11 4.5 L6.8 11 H10 L9 15.5 L13.2 9 H10 Z" fill="none" stroke="#555" stroke-width="1" stroke-linejoin="round"/></svg>
</body></html>
